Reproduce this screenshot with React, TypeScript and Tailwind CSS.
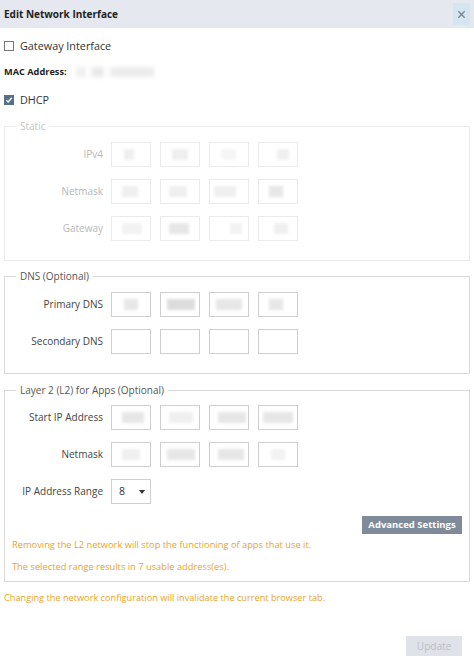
import React from 'react';

// blurred placeholder blocks standing in for redacted values
type Blob = { l: number; w: number; c: string };

const Blur: React.FC<{ blobs: Blob[] }> = ({ blobs }) => (
  <div className="relative h-full w-full">
    {blobs.map((b, i) => (
      <div
        key={i}
        className="absolute top-[6px] h-[11px] blur-[1.5px]"
        style={{ left: b.l, width: b.w, background: b.c }}
      />
    ))}
  </div>
);

const Box: React.FC<{ disabled?: boolean; blobs?: Blob[] }> = ({ disabled, blobs = [] }) => (
  <div
    className={
      'h-[25px] w-[40px] border bg-white ' + (disabled ? 'border-[#ebebeb]' : 'border-[#cfcfcf]')
    }
  >
    <Blur blobs={blobs} />
  </div>
);

const Row: React.FC<{ label: string; disabled?: boolean; boxes: Blob[][] }> = ({ label, disabled, boxes }) => (
  <div className="flex items-center">
    <div
      className={
        'w-[98px] shrink-0 text-right text-[10px] ' + (disabled ? 'text-[#b8b8b8]' : 'text-[#444]')
      }
    >
      {label}
    </div>
    <div className="ml-[8px] flex gap-[9px]">
      {boxes.map((b, i) => (
        <Box key={i} disabled={disabled} blobs={b} />
      ))}
    </div>
  </div>
);

const g1 = '#efefef';
const g2 = '#e6e6e6';
const g3 = '#dcdcdc';

const Section: React.FC<{
  title: string;
  disabled?: boolean;
  className?: string;
  children: React.ReactNode;
}> = ({ title, disabled, className = '', children }) => (
  <fieldset
    className={
      'border ' + (disabled ? 'border-[#ebebeb] ' : 'border-[#d9d9d9] ') + className
    }
  >
    <legend
      className={
        'ml-[11px] px-[4px] text-[10px] leading-[14px] ' +
        (disabled ? 'text-[#c4c4c4]' : 'text-[#555]')
      }
    >
      {title}
    </legend>
    {children}
  </fieldset>
);

export default function App() {
  return (
    <div className="h-[663px] w-[474px] bg-white font-['Open_Sans',sans-serif] text-[#333]">
      <div className="flex h-[28px] items-center justify-between bg-[#e5e8ee] pl-[4px] pr-[4px]">
        <span className="text-[10px] font-bold text-[#222]">Edit Network Interface</span>
        <div className="flex h-[22px] w-[17px] items-center justify-center bg-[#d4e7f0]">
          <svg width="9" height="9" viewBox="0 0 10 10">
            <path d="M1.5 1.5 L8.5 8.5 M8.5 1.5 L1.5 8.5" stroke="#7a8794" strokeWidth="1.6" />
          </svg>
        </div>
      </div>

      <div className="px-[4px]">
        <div className="mt-[10px] flex h-[16px] items-center">
          <div className="h-[10px] w-[10px] border border-[#777] bg-white" />
          <span className="ml-[6px] text-[10.8px] text-[#333]">Gateway Interface</span>
        </div>

        <div className="mt-[10px] flex h-[16px] items-center">
          <span className="text-[9.2px] font-bold text-[#222]">MAC Address:</span>
          <div className="ml-[9px] flex h-[10px] items-center gap-[6px] blur-[2px]">
            <div className="h-[10px] w-[10px] bg-[#efefef]" />
            <div className="h-[10px] w-[12px] bg-[#e8e8e8]" />
            <div className="h-[10px] w-[44px] bg-[#ececec]" />
          </div>
        </div>

        <div className="mt-[12px] flex h-[16px] items-center">
          <div className="flex h-[10px] w-[10px] items-center justify-center bg-[#56708c]">
            <svg width="8" height="8" viewBox="0 0 8 8">
              <path d="M1.3 4.2 L3.2 6 L6.8 1.8" stroke="#fff" strokeWidth="1.5" fill="none" />
            </svg>
          </div>
          <span className="ml-[6px] text-[10.8px] text-[#333]">DHCP</span>
        </div>

        <Section title="Static" disabled className="mt-[11px] pb-[19px] pt-[9px]">
          <div className="flex flex-col gap-[12px]">
            <Row
              label="IPv4"
              disabled
              boxes={[
                [{ l: 12, w: 10, c: g1 }],
                [{ l: 11, w: 16, c: g1 }],
                [{ l: 12, w: 14, c: '#f5f5f5' }],
                [{ l: 18, w: 12, c: g1 }],
              ]}
            />
            <Row
              label="Netmask"
              disabled
              boxes={[
                [{ l: 10, w: 16, c: g1 }],
                [{ l: 8, w: 18, c: g1 }],
                [{ l: 4, w: 22, c: g1 }],
                [{ l: 10, w: 14, c: g2 }],
              ]}
            />
            <Row
              label="Gateway"
              disabled
              boxes={[
                [{ l: 10, w: 20, c: '#f2f2f2' }],
                [{ l: 8, w: 20, c: g2 }],
                [{ l: 20, w: 12, c: '#f2f2f2' }],
                [{ l: 15, w: 14, c: g1 }],
              ]}
            />
          </div>
        </Section>

        <Section title="DNS (Optional)" className="mt-[8px] pb-[19px] pt-[9px]">
          <div className="flex flex-col gap-[12px]">
            <Row
              label="Primary DNS"
              boxes={[
                [{ l: 12, w: 14, c: g2 }],
                [{ l: 6, w: 28, c: g3 }],
                [{ l: 6, w: 26, c: g2 }],
                [{ l: 10, w: 14, c: g2 }],
              ]}
            />
            <Row label="Secondary DNS" boxes={[[], [], [], []]} />
          </div>
        </Section>

        <Section title="Layer 2 (L2) for Apps (Optional)" className="mt-[9px] pb-[7px] pt-[8px]">
          <div className="flex flex-col gap-[12px]">
            <Row
              label="Start IP Address"
              boxes={[
                [{ l: 10, w: 22, c: g2 }],
                [{ l: 8, w: 24, c: g1 }],
                [{ l: 8, w: 28, c: g2 }],
                [{ l: 4, w: 30, c: g2 }],
              ]}
            />
            <Row
              label="Netmask"
              boxes={[
                [{ l: 10, w: 18, c: g1 }],
                [{ l: 6, w: 28, c: g2 }],
                [{ l: 8, w: 26, c: g2 }],
                [{ l: 12, w: 14, c: '#f2f2f2' }],
              ]}
            />
            <div className="flex items-center">
              <div className="w-[98px] shrink-0 text-right text-[10px] text-[#444]">IP Address Range</div>
              <div className="ml-[8px] flex h-[25px] w-[40px] items-center justify-between border border-[#cfcfcf] pl-[7px] pr-[5px]">
                <span className="text-[10.5px] text-[#333]">8</span>
                <svg width="6" height="4" viewBox="0 0 6 4">
                  <path d="M0 0 H6 L3 4 Z" fill="#333" />
                </svg>
              </div>
            </div>
          </div>

          <div className="mt-[12px] flex justify-end pr-[7px]">
            <button className="h-[18px] w-[100px] bg-[#7f8b98] text-[9.5px] font-bold text-white">
              Advanced Settings
            </button>
          </div>
          <div className="mt-[4px] pl-[7px] text-[9.3px] leading-[14px] text-[#e8a52a]">
            Removing the L2 network will stop the functioning of apps that use it.
          </div>
          <div className="mt-[8px] pl-[7px] text-[9.3px] leading-[14px] text-[#e8a52a]">
            The selected range results in 7 usable address(es).
          </div>
        </Section>

        <div className="mt-[9px] text-[9.2px] leading-[14px] text-[#e8a52a]">
          Changing the network configuration will invalidate the current browser tab.
        </div>

        <div className="mt-[31px] flex justify-end pr-[8px]">
          <button className="h-[20px] w-[56px] bg-[#dfe2e8] text-[10px] text-[#b9bfc8]">Update</button>
        </div>
      </div>
    </div>
  );
}
